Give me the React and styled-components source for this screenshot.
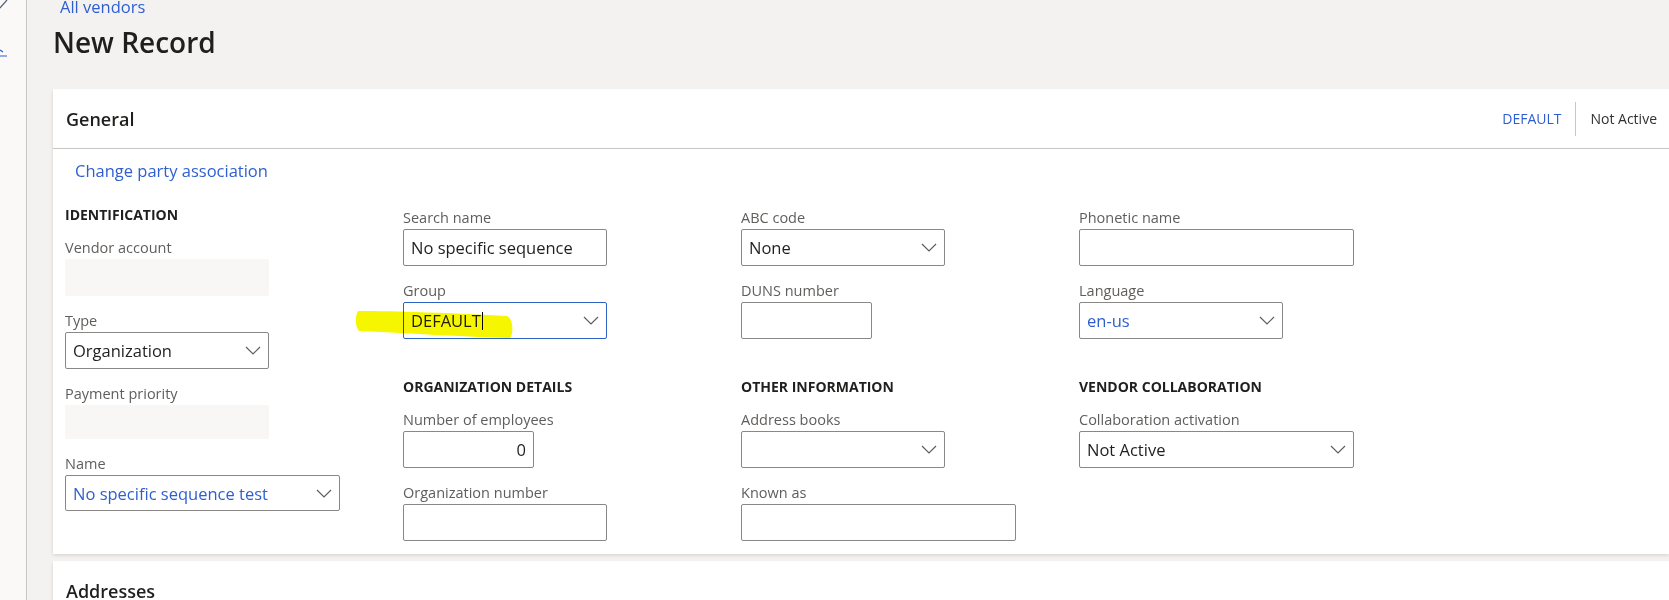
import styled, { createGlobalStyle } from "styled-components";

const GlobalStyle = createGlobalStyle`
  html, body {
    margin: 0;
    padding: 0;
  }
  body {
    font-family: "Open Sans", "Noto Sans", sans-serif;
    color: #323130;
    background: #f3f2f1;
    overflow: hidden;
  }
`;

const widths = { small: 131, medium: 204, wide: 275 };

const Page = styled.div`
  display: flex;
  height: 600px;
  overflow: hidden;
`;

const Rail = styled.nav`
  width: 26px;
  flex-shrink: 0;
  background: #faf9f8;
  border-right: 1px solid #c8c6c4;
  display: flex;
  flex-direction: column;
  gap: 39px;
  overflow: hidden;
`;

const Main = styled.main`
  flex: 1;
  min-width: 0;
  padding-left: 26px;
  display: flex;
  flex-direction: column;
`;

const Breadcrumb = styled.a`
  margin-top: -3px;
  padding-left: 7px;
  font-size: 16.5px;
  line-height: 20px;
  color: #2f5fcf;
  text-decoration: none;
`;

const Title = styled.h1`
  margin: 7px 0 0;
  font-size: 28px;
  line-height: 36px;
  font-weight: 600;
  color: #201f1e;
`;

const Card = styled.section`
  margin-top: ${p => p.$gap}px;
  background: #fff;
  box-shadow: 0 1.6px 3.6px rgba(0, 0, 0, 0.13), 0 0.3px 0.9px rgba(0, 0, 0, 0.11);
`;

const CardHeader = styled.header`
  height: 60px;
  box-sizing: border-box;
  padding: 0 12px 0 13px;
  display: flex;
  align-items: center;
  justify-content: space-between;
  border-bottom: ${p => (p.$open ? "1px solid #c8c6c4" : "none")};
`;

const CardTitle = styled.h2`
  margin: 0;
  font-size: 18px;
  font-weight: 600;
  color: #201f1e;
`;

const Summary = styled.div`
  display: flex;
  align-items: center;
  font-size: 14px;
`;

const SummaryItem = styled.span`
  color: ${p => (p.$link ? "#2f5fcf" : "#323130")};
`;

const Divider = styled.span`
  width: 1px;
  height: 34px;
  margin: 0 14px;
  background: #c8c6c4;
`;

const CardBody = styled.div`
  padding-left: 12px;
`;

const ActionLink = styled.a`
  display: block;
  margin: 12px 0 24px;
  padding-left: 10px;
  font-size: 16.5px;
  line-height: 20px;
  color: #2f5fcf;
`;

const Columns = styled.div`
  display: grid;
  grid-template-columns: repeat(4, 338px);
`;

const Column = styled.div`
  display: flex;
  flex-direction: column;
  align-items: flex-start;
  padding-top: ${p => p.$offset || 0}px;
`;

const GroupTitle = styled.h3`
  margin: 0 0 11px;
  font-size: 14px;
  line-height: 20px;
  font-weight: 700;
  color: #201f1e;
  &:not(:first-child) {
    margin-top: 25px;
  }
`;

const Field = styled.div`
  position: relative;
  margin-bottom: 13px;
`;

const Label = styled.div`
  font-size: 14.5px;
  line-height: 23px;
  color: #605e5c;
`;

const Control = styled.div`
  box-sizing: border-box;
  width: ${p => widths[p.$size]}px;
  height: ${p => p.$height || 37}px;
  padding: 0 7px;
  display: flex;
  align-items: center;
  justify-content: ${p => (p.$numeric ? "flex-end" : "space-between")};
  border: 1px solid ${p => (p.$focused ? "#2b63c5" : p.$readOnly ? "transparent" : "#8a8886")};
  border-radius: 2px;
  background: ${p => (p.$readOnly ? "#f8f7f6" : "#fff")};
  font-size: 16.5px;
  color: ${p => (p.$link ? "#2f5fcf" : "#201f1e")};
  white-space: nowrap;
`;

const Caret = styled.span`
  display: inline-block;
  width: 1px;
  height: 18px;
  margin-left: 1px;
  vertical-align: -3px;
  background: #000;
`;

// yellow marker stroke drawn across the Group field
const Marker = styled.svg`
  position: absolute;
  left: -48px;
  top: 31px;
  width: 160px;
  height: 30px;
  mix-blend-mode: multiply;
  pointer-events: none;
`;

const Chevron = () => (
  <svg width="16" height="9" viewBox="0 0 16 9">
    <path d="M1 1l7 7 7-7" fill="none" stroke="#605e5c" strokeWidth="1.2" />
  </svg>
);

const Input = ({ label, value, size = "medium", ...rest }) => (
  <Field>
    <Label>{label}</Label>
    <Control $size={size} {...rest}>
      <span>{value}</span>
    </Control>
  </Field>
);

const Select = ({ label, value, size = "medium", ...rest }) => (
  <Field>
    <Label>{label}</Label>
    <Control $size={size} {...rest}>
      <span>{value}</span>
      <Chevron />
    </Control>
  </Field>
);

const App = () => (
  <>
    <GlobalStyle />
    <Page>
      <Rail>
        <svg width="26" height="10" viewBox="0 0 26 10">
          <path d="M-1 9L7 0" stroke="#4b5a78" strokeWidth="1.2" fill="none" />
        </svg>
        <svg width="26" height="10" viewBox="0 0 26 10">
          <path d="M0 1l3 2M0 7h7" stroke="#2f5fcf" strokeWidth="1.2" fill="none" />
        </svg>
      </Rail>
      <Main>
        <Breadcrumb>All vendors</Breadcrumb>
        <Title>New Record</Title>

        <Card $gap={29}>
          <CardHeader $open>
            <CardTitle>General</CardTitle>
            <Summary>
              <SummaryItem $link>DEFAULT</SummaryItem>
              <Divider />
              <SummaryItem>Not Active</SummaryItem>
            </Summary>
          </CardHeader>
          <CardBody>
            <ActionLink>Change party association</ActionLink>
            <Columns>
              <Column>
                <GroupTitle>IDENTIFICATION</GroupTitle>
                <Input label="Vendor account" value="" $readOnly />
                <Select label="Type" value="Organization" />
                <Input label="Payment priority" value="" $readOnly $height={34} />
                <Select label="Name" value="No specific sequence test" size="wide" $link $height={36} />
              </Column>

              <Column $offset={1}>
                <Input label="Search name" value="No specific sequence" />
                <Field>
                  <Label>Group</Label>
                  <Control $size="medium" $focused>
                    <span>
                      DEFAULT<Caret />
                    </span>
                    <Chevron />
                  </Control>
                  <Marker viewBox="0 0 160 30">
                    <path
                      d="M3 1C40 1 100 3 152 6C158 8 159 23 155 28C110 27 50 23 4 21C0 17 0 5 3 1Z"
                      fill="#f6f600"
                    />
                  </Marker>
                </Field>
                <GroupTitle>ORGANIZATION DETAILS</GroupTitle>
                <Input label="Number of employees" value="0" size="small" $numeric />
                <Input label="Organization number" value="" />
              </Column>

              <Column $offset={1}>
                <Select label="ABC code" value="None" />
                <Input label="DUNS number" value="" size="small" />
                <GroupTitle>OTHER INFORMATION</GroupTitle>
                <Select label="Address books" value="" />
                <Input label="Known as" value="" size="wide" />
              </Column>

              <Column $offset={1}>
                <Input label="Phonetic name" value="" size="wide" />
                <Select label="Language" value="en-us" $link />
                <GroupTitle>VENDOR COLLABORATION</GroupTitle>
                <Select label="Collaboration activation" value="Not Active" size="wide" />
              </Column>
            </Columns>
          </CardBody>
        </Card>

        <Card $gap={7}>
          <CardHeader>
            <CardTitle>Addresses</CardTitle>
          </CardHeader>
        </Card>
      </Main>
    </Page>
  </>
);

export default App;
